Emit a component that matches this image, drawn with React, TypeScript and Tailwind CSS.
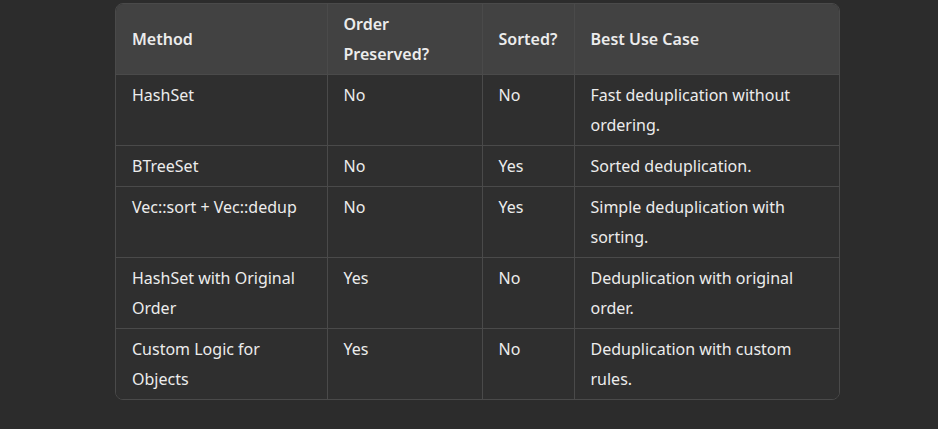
const rows: [string, string, string, string][] = [
  ["HashSet", "No", "No", "Fast deduplication without ordering."],
  ["BTreeSet", "No", "Yes", "Sorted deduplication."],
  ["Vec::sort + Vec::dedup", "No", "Yes", "Simple deduplication with sorting."],
  ["HashSet with Original Order", "Yes", "No", "Deduplication with original order."],
  ["Custom Logic for Objects", "Yes", "No", "Deduplication with custom rules."],
];

const headers = ["Method", "Order Preserved?", "Sorted?", "Best Use Case"];

export default function App() {
  return (
    <div
      className="w-[938px] h-[429px] bg-[#2c2c2c] pt-[3px] text-[#ececec]"
      style={{ fontFamily: '"Segoe UI", "Noto Sans", Lato, sans-serif' }}
    >
      <div className="ml-[115px] w-[725px] rounded-lg border border-[#4a4a4a] overflow-hidden">
        <table className="w-full table-fixed border-collapse text-[16px] leading-[30px]">
          <colgroup>
            <col className="w-[211px]" />
            <col className="w-[155px]" />
            <col className="w-[92px]" />
            <col />
          </colgroup>
          <thead>
            <tr className="bg-[#424242]">
              {headers.map((h, i) => (
                <th
                  key={h}
                  className={
                    "text-left font-semibold align-middle px-4 py-[5px] h-[70px] " +
                    (i > 0 ? "border-l border-[#4a4a4a]" : "")
                  }
                >
                  {h}
                </th>
              ))}
            </tr>
          </thead>
          <tbody className="bg-[#2f2f2f]">
            {rows.map((r) => (
              <tr key={r[0]} className="border-t border-[#4a4a4a]">
                {r.map((c, i) => (
                  <td
                    key={i}
                    className={
                      "align-top px-4 py-[5px] " +
                      (i > 0 ? "border-l border-[#4a4a4a]" : "")
                    }
                  >
                    {c}
                  </td>
                ))}
              </tr>
            ))}
          </tbody>
        </table>
      </div>
    </div>
  );
}
